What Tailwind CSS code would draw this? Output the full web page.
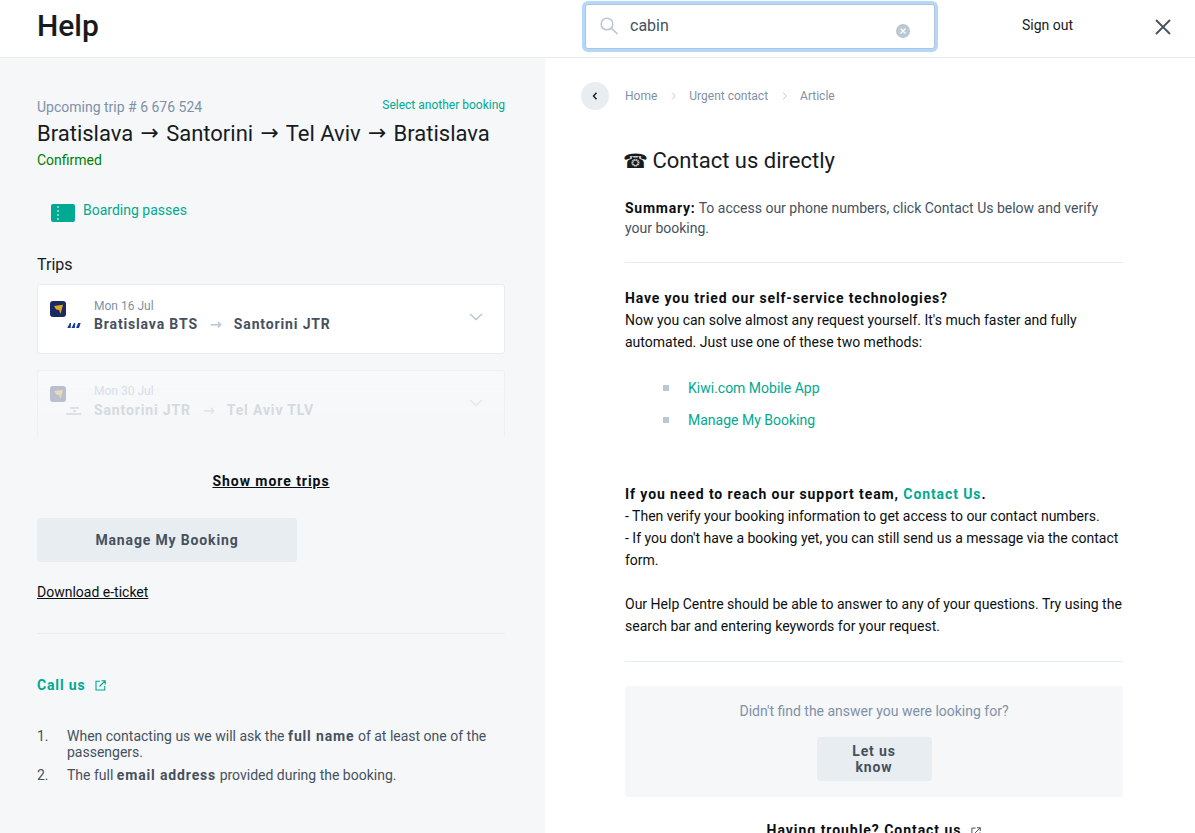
<!DOCTYPE html>
<html lang="en">
<head>
  <meta charset="UTF-8" />
  <title>Help</title>
  <script src="https://cdn.jsdelivr.net/npm/@tailwindcss/browser@4"></script>
</head>
<body class="bg-white text-[#171b1e] font-['Roboto',sans-serif] h-[833px] overflow-hidden">

  <!-- Header -->
  <header class="h-[58px] border-b border-[#e8edf1] flex items-center bg-white">
    <h1 class="w-[585px] pl-[37px] text-[30px] font-medium leading-none pb-[6px]">Help</h1>
    <div class="w-[350px] h-[45px] mb-[5px] bg-white border border-[#b4c3d4] rounded-[3px] ring-[3px] ring-[#b3d8fb] flex items-center pl-[14px] pr-[24px]">
      <svg class="w-[19px] h-[18px] mr-[11px] mb-[1px]" viewBox="0 0 19 18" fill="none" stroke="#bac7d5" stroke-width="1.6"><circle cx="7" cy="7" r="5.8"/><path d="M11.2 11.2 17.5 17"/></svg>
      <span class="text-base text-[#46515e] flex-1 pb-[1px]">cabin</span>
      <svg class="w-[14px] h-[14px] mt-[9px]" viewBox="0 0 14 14"><circle cx="7" cy="7" r="7" fill="#bac7d5"/><path d="M4.5 4.5l5 5M9.5 4.5l-5 5" stroke="#fff" stroke-width="1.4"/></svg>
    </div>
    <a class="ml-[87px] text-sm text-[#171b1e] mb-[7px]">Sign out</a>
    <svg class="w-[16px] h-[16px] ml-[82px] mb-[4px]" viewBox="0 0 16 16" fill="none" stroke="#46515e" stroke-width="1.8"><path d="M1 1l14 14M15 1L1 15"/></svg>
  </header>

  <div class="flex h-[775px]">
    <!-- Left column: booking -->
    <aside class="w-[545px] shrink-0 bg-[#f5f7f9] pl-[37px] pr-[40px] pt-[39px]">
      <div class="flex justify-between">
        <span class="text-sm leading-[20px] text-[#7f91a8]">Upcoming trip # 6 676 524</span>
        <a class="text-xs leading-[14px] mt-[1px] text-[#00a991]">Select another booking</a>
      </div>
      <h2 class="text-[22px] leading-[32px] mt-[1px]">Bratislava <span class="font-['DejaVu_Sans'] inline-block w-[22px] text-center relative -top-[1px]">→</span> Santorini <span class="font-['DejaVu_Sans'] inline-block w-[22px] text-center relative -top-[1px]">→</span> Tel Aviv <span class="font-['DejaVu_Sans'] inline-block w-[22px] text-center relative -top-[1px]">→</span> Bratislava</h2>
      <p class="text-sm leading-[20px] text-[#008000]">Confirmed</p>

      <a class="flex items-center mt-[28px] ml-[14px] text-sm leading-[20px] text-[#00a991]">
        <span class="relative w-[24px] h-[18px] mt-[6px] mr-[8px] rounded-[2px] bg-[#00a991]">
          <span class="absolute left-[6px] top-[2px] bottom-[2px] border-l-2 border-dotted border-[#7fd4c8]"></span>
        </span>
        Boarding passes
      </a>

      <h3 class="text-base leading-[22px] mt-[32px]">Trips</h3>

      <!-- Trip 1 -->
      <div class="mt-[8px] h-[70px] bg-white border border-[#e8edf1] rounded-[3px] flex pl-[12px] pt-[17px] pr-[21px]">
        <div class="w-[44px] shrink-0 -mt-[1px]">
          <span class="flex w-[16px] h-[16px] rounded-[3px] bg-[#1a2a63] items-center justify-center">
            <svg class="w-[11px] h-[11px]" viewBox="0 0 11 11"><path d="M1 2 10 .8 7.5 10 6 6 3.2 5.4z" fill="#e0a921"/></svg>
          </span>
          <svg class="w-[16px] h-[5px] ml-[16px] mt-[6px]" viewBox="0 0 16 6"><path d="M0 6 3 0h1.500L4 6zM5 6l3-6h1.500L9 6zM10.500 6 13 0h3l-2 6z" fill="#0f3d9e"/></svg>
        </div>
        <div class="flex-1">
          <p class="text-xs leading-[10px] mt-[-1px] text-[#7f91a8]">Mon 16 Jul</p>
          <p class="text-sm leading-[20px] mt-[3px] font-bold tracking-[0.85px] text-[#46515e]">Bratislava BTS<span class="font-['DejaVu_Sans'] inline-block w-[36px] text-center text-[#bac7d5] font-bold tracking-normal">→</span>Santorini JTR</p>
        </div>
        <svg class="w-[14px] h-[8px] mt-[11px]" viewBox="0 0 14 8" fill="none" stroke="#bac7d5" stroke-width="1.6"><path d="M1 1l6 5.500L13 1"/></svg>
      </div>

      <!-- Trip 2, fading out -->
      <div class="mt-[16px] h-[66px] bg-linear-to-b from-white/30 to-transparent border border-[#e8edf1]/60 border-b-0 rounded-t-[3px] flex pl-[12px] pt-[15px] pr-[21px]">
        <div class="w-[44px] shrink-0">
          <span class="flex w-[16px] h-[16px] rounded-[3px] bg-[#b9bfcf] items-center justify-center">
            <svg class="w-[11px] h-[11px]" viewBox="0 0 11 11"><path d="M1 2 10 .8 7.5 10 6 6 3.2 5.4z" fill="#e6dcbc"/></svg>
          </span>
          <svg class="w-[16px] h-[8px] ml-[16px] mt-[5px]" viewBox="0 0 16 8"><path d="M4 1h9M0 7h15M7 4h3" stroke="#c3c9d1" stroke-width="1.2"/></svg>
        </div>
        <div class="flex-1">
          <p class="text-xs leading-[10px] text-[#d7dfe8]">Mon 30 Jul</p>
          <p class="text-sm leading-[20px] mt-[4px] font-bold tracking-[0.85px] text-[#d5dae0]">Santorini JTR<span class="font-['DejaVu_Sans'] inline-block w-[36px] text-center text-[#e0e6ec] font-bold tracking-normal">→</span>Tel Aviv TLV</p>
        </div>
        <svg class="w-[14px] h-[8px] mt-[13px]" viewBox="0 0 14 8" fill="none" stroke="#e3e8ed" stroke-width="1.6"><path d="M1 1l6 5.500L13 1"/></svg>
      </div>

      <div class="text-center mt-[33px]">
        <a class="text-sm leading-[20px] font-bold tracking-[0.95px] underline text-[#0b0f12]">Show more trips</a>
      </div>

      <button class="block w-[260px] h-[44px] mt-[25px] rounded-[3px] bg-[#e8edf1] text-sm font-bold tracking-[0.85px] text-[#46515e]">Manage My Booking</button>

      <a class="block mt-[20px] text-sm leading-[20px] underline text-[#0b0f12]">Download e-ticket</a>

      <div class="border-t border-[#e8edf1] mt-[31px]"></div>

      <a class="flex items-center mt-[41px] text-sm leading-[20px] font-bold tracking-[0.85px] text-[#00a991]">
        Call us
        <svg class="w-[11px] h-[11px] ml-[9px]" viewBox="0 0 11 11" fill="none" stroke="#00a991" stroke-width="1.1"><path d="M5 1.200H1v8.800h8.800V6M4.500 6.500 10 1M6.500 .8h3.700v3.700"/></svg>
      </a>

      <ol class="mt-[33px] text-sm leading-[16px] text-[#46515e]">
        <li class="flex"><span class="w-[30px] shrink-0">1.</span><span>When contacting us we will ask the <b class="font-bold tracking-[0.85px]">full name</b> of at least one of the passengers.</span></li>
        <li class="flex mt-[7px]"><span class="w-[30px] shrink-0">2.</span><span>The full <b class="font-bold tracking-[0.85px]">email address</b> provided during the booking.</span></li>
      </ol>
    </aside>

    <!-- Right column: article -->
    <main class="flex-1 pl-[36px] pr-[72px] pt-[24px] overflow-hidden">
      <nav class="flex items-center text-xs text-[#7f91a8] h-[28px]">
        <a class="w-[28px] h-[28px] rounded-full bg-[#e8edf1] flex items-center justify-center mr-[16px]">
          <svg class="w-[6px] h-[8px]" viewBox="0 0 6 8" fill="none" stroke="#171b1e" stroke-width="1.4"><path d="M4.500 .8 1.500 4l3 3.200"/></svg>
        </a>
        <span>Home</span>
        <svg class="w-[5px] h-[8px] mx-[13.500px]" viewBox="0 0 5 8" fill="none" stroke="#bac7d5"><path d="M1 .5 4.200 4 1 7.500"/></svg>
        <span>Urgent contact</span>
        <svg class="w-[5px] h-[8px] mx-[13.500px]" viewBox="0 0 5 8" fill="none" stroke="#bac7d5"><path d="M1 .5 4.200 4 1 7.500"/></svg>
        <span>Article</span>
      </nav>

      <article class="ml-[44px] text-sm leading-[22px]">
        <h2 class="text-[22px] leading-[32px] mt-[35px]"><span class="inline-block -ml-[2px] w-[24px] text-[20px] leading-none">☎</span> Contact us directly</h2>
        <p class="mt-[21px] leading-[20px] text-[#46515e]"><b class="font-bold tracking-[0.75px] text-[#0b0f12]">Summary:</b> To access our phone numbers, click Contact Us below and verify your booking.</p>
        <div class="border-t border-[#e8edf1] mt-[24px]"></div>

        <p class="mt-[24px] text-[#0b0f12]"><b class="font-bold tracking-[0.85px]">Have you tried our self-service technologies?</b><br>Now you can solve almost any request yourself. It's much faster and fully automated. Just use one of these two methods:</p>
        <ul class="mt-[24px] ml-[38px] text-[#00a991] space-y-[10px]">
          <li class="flex items-center"><span class="w-[6px] h-[6px] bg-[#bac7d5] mr-[19px]"></span>Kiwi.com Mobile App</li>
          <li class="flex items-center"><span class="w-[6px] h-[6px] bg-[#bac7d5] mr-[19px]"></span>Manage My Booking</li>
        </ul>

        <p class="mt-[52px] text-[#0b0f12]"><b class="font-bold tracking-[0.9px]">If you need to reach our support team, <span class="text-[#00a991]">Contact Us</span>.</b><br>- Then verify your booking information to get access to our contact numbers.<br>- If you don't have a booking yet, you can still send us a message via the contact form.</p>
        <p class="mt-[22px] text-[#0b0f12]">Our Help Centre should be able to answer to any of your questions. Try using the search bar and entering keywords for your request.</p>
        <div class="border-t border-[#e8edf1] mt-[24px]"></div>

        <div class="mt-[24px] h-[111px] bg-[#f5f7f9] rounded-[3px] flex flex-col items-center pt-[14px]">
          <p class="text-[#7f91a8]">Didn't find the answer you were looking for?</p>
          <button class="w-[115px] h-[44px] mt-[15px] px-[30px] rounded-[3px] bg-[#e8edf1] text-sm leading-[16px] font-bold tracking-[0.85px] text-[#46515e]">Let us know</button>
        </div>

        <div class="flex justify-center items-center mt-[22px] font-bold tracking-[0.95px] text-[#0b0f12]">
          Having trouble? Contact us
          <svg class="w-[10px] h-[10px] ml-[10px] mt-[3px]" viewBox="0 0 11 11" fill="none" stroke="#46515e" stroke-width="1.1"><path d="M5 1.200H1v8.800h8.800V6M4.500 6.500 10 1M6.500 .8h3.700v3.700"/></svg>
        </div>
      </article>
    </main>
  </div>
</body>
</html>
